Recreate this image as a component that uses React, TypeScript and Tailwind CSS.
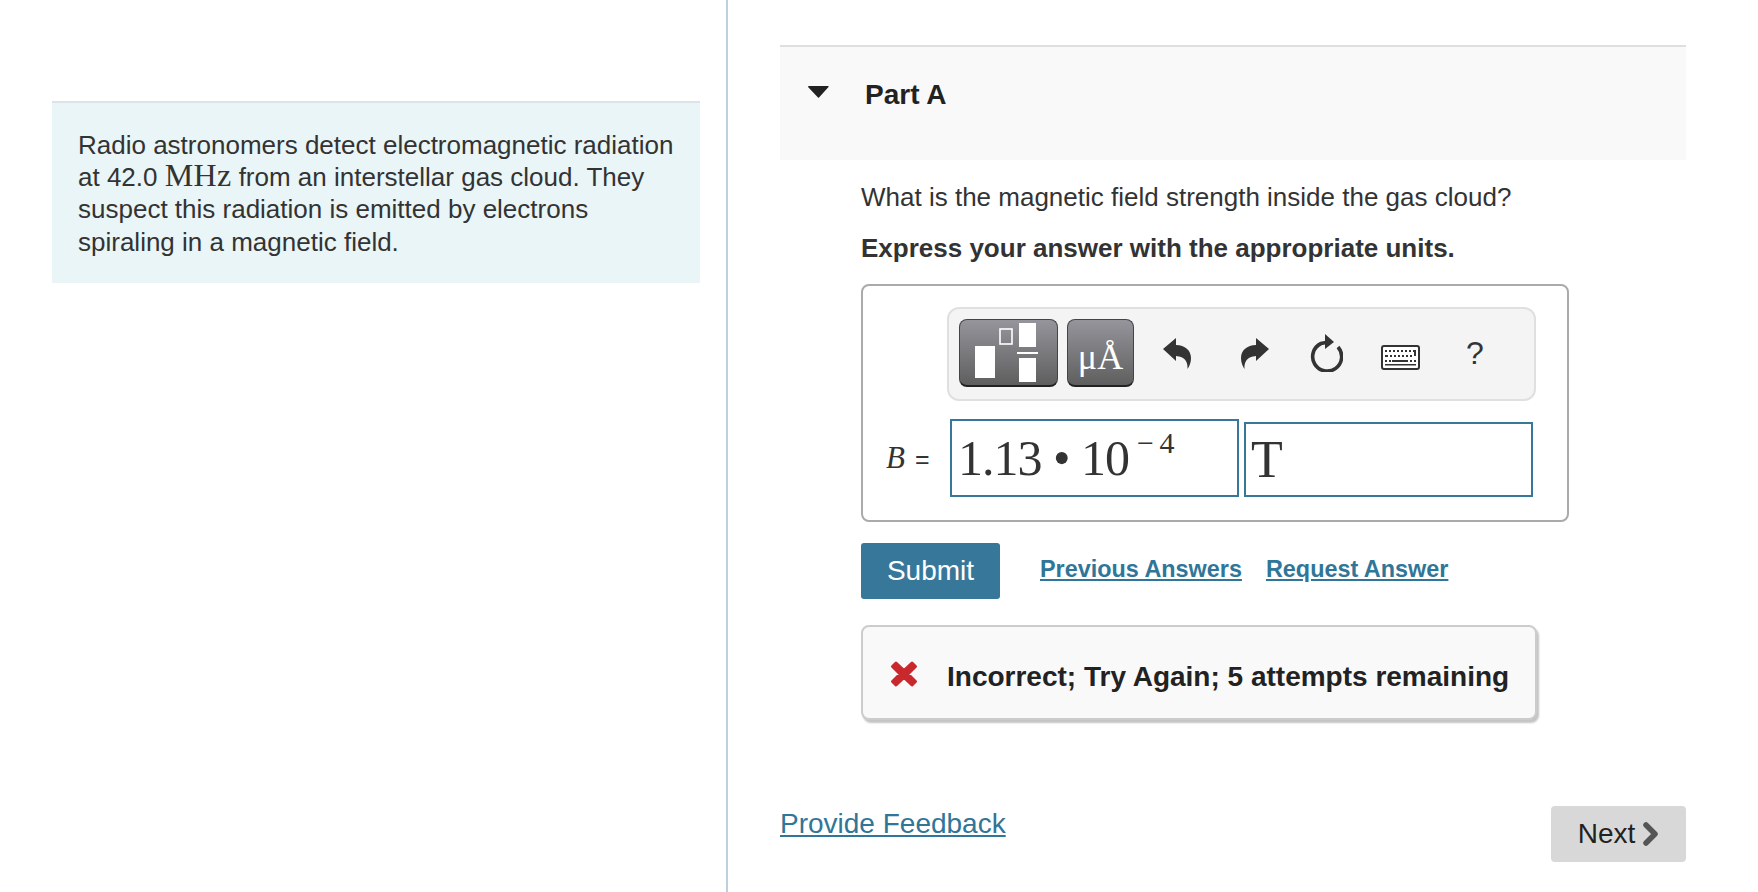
import React from "react";

const Reply = ({ flip = false }: { flip?: boolean }) => (
  <svg width="28" height="31" viewBox="0 0 28 31" className={flip ? "-scale-x-100" : ""}>
    <path d="M0 11 L13 0 V7 C22 7.5 28 12 28 20 C28 24.5 26.5 28 24.5 31 C25 24 22 18.5 13 18 V23 Z" fill="#333" />
  </svg>
);

const Refresh = () => (
  <svg width="34" height="38" viewBox="0 0 34 38" fill="none">
    <path d="M29 13 A14.5 14.5 0 1 1 12 9.5 L17 8.5" stroke="#333" strokeWidth="3.6" />
    <path d="M16 0 L25 8 L16 15 Z" fill="#333" />
  </svg>
);

const Keyboard = () => (
  <svg width="39" height="25" viewBox="0 0 39 25">
    <rect x="1" y="1" width="37" height="23" rx="2" fill="#fff" stroke="#333" strokeWidth="2" />
    <g fill="#333">
      <path d="M4 5h2v2H4zM8 5h2v2H8zM12 5h2v2h-2zM16 5h2v2h-2zM20 5h2v2h-2zM24 5h2v2h-2zM28 5h2v2h-2zM32 5h3v6h-2V7h-1z" />
      <path d="M4 10h3v2H4zM9 10h2v2H9zM13 10h2v2h-2zM17 10h2v2h-2zM21 10h2v2h-2zM25 10h2v2h-2zM29 10h2v2h-2z" />
      <path d="M4 15h2v2H4zM8 15h2v2H8zM11 15h16v2H11zM29 15h2v2h-2zM33 15h2v2h-2z" />
      <path d="M4 19h31v1.5H4z" />
    </g>
  </svg>
);

const RedX = () => (
  <svg width="28" height="28" viewBox="0 0 28 28">
    <path d="M6 3 L14 10.5 L22 3 L25.5 6.5 L18 14 L25.5 21.5 L22 25 L14 17.5 L6 25 L2.5 21.5 L10 14 L2.5 6.5 Z" fill="#c9282d" stroke="#c9282d" strokeWidth="3" strokeLinejoin="round" />
  </svg>
);

export default function App() {
  return (
    <div className="flex h-[892px] overflow-hidden bg-white text-[#333] font-['Liberation_Sans',Arial,sans-serif]">
      <div className="w-[728px] shrink-0 border-r-2 border-[#bcd0dd] pl-[52px] pr-[26px] pt-[101px]">
        <div className="h-[182px] border-t-2 border-[#dde3e6] bg-[#e9f5f7] pl-[26px] pr-[20px] pt-[26px] text-[26px] leading-[32.2px]">
          <p>
            Radio astronomers detect electromagnetic radiation at 42.0{" "}
            <span className="font-['Liberation_Serif',serif] text-[32px] leading-[0] tracking-[0.3px]">MHz</span> from an interstellar gas cloud. They suspect this radiation is emitted by electrons spiraling in a magnetic field.
          </p>
        </div>
      </div>

      <div className="ml-[52px] flex w-[906px] flex-col pt-[45px]">
        <div className="flex h-[115px] items-start border-t-2 border-[#dfdfdf] bg-[#f9f9f9] pl-[28px] pt-[32px]">
          <svg width="21" height="12" viewBox="0 0 21 12" className="mt-[7px]">
            <path d="M0 1 Q0 0 1 0 H20 Q21 0 20.5 1 L11 11.5 Q10.5 12 10 11.5 L0.5 1.5 Z" fill="#222" />
          </svg>
          <span className="ml-[36px] text-[28px] font-bold leading-[32px] text-[#222]">Part A</span>
        </div>

        <div className="pl-[81px]">
          <p className="mt-[22px] text-[26px] leading-[30px]">What is the magnetic field strength inside the gas cloud?</p>
          <p className="mt-[21px] text-[26px] font-bold leading-[30px]">Express your answer with the appropriate units.</p>

          <div className="mt-[21px] h-[238px] w-[708px] rounded-[8px] border-2 border-[#aaa] pl-[84px] pt-[21px]">
            <div className="flex h-[94px] w-[589px] items-center rounded-[12px] border-2 border-[#e0e0e0] bg-[#f4f4f4] pl-[10px] pb-[2px]">
              <div className="flex h-[68px] w-[99px] items-center justify-center rounded-[8px] border border-b-2 border-[#444] border-b-[#222] bg-linear-to-b from-[#96959c] to-[#5f5f5f]">
                <svg width="68" height="60" viewBox="0 0 68 60">
                  <rect x="0" y="23" width="20" height="32" fill="#fff" />
                  <rect x="25" y="6" width="12" height="15" fill="none" stroke="#fff" strokeWidth="1.6" />
                  <rect x="44" y="0" width="17" height="24" fill="#fff" />
                  <rect x="42" y="29" width="21" height="2" fill="#fff" />
                  <rect x="44" y="35" width="17" height="24" fill="#fff" />
                </svg>
              </div>
              <div className="relative ml-[9px] flex h-[68px] w-[67px] items-end justify-center rounded-[8px] border border-b-2 border-[#444] border-b-[#222] bg-linear-to-b from-[#96959c] to-[#5f5f5f] pb-[8px] font-['Liberation_Serif',serif] text-[36px] leading-[40px] text-white">
                μÅ
              </div>
              <div className="ml-[29px] flex w-[28px] justify-center"><Reply /></div>
              <div className="ml-[50px] flex w-[28px] justify-center"><Reply flip /></div>
              <div className="ml-[40px] flex w-[34px] justify-center"><Refresh /></div>
              <div className="ml-[38px] mt-[8px] flex w-[39px] justify-center"><Keyboard /></div>
              <div className="ml-[46px] w-[18px] text-[32px] leading-[36px]">?</div>
            </div>

            <div className="-ml-[82px] mt-[18px] flex items-end">
              <div className="mb-[21px] w-[85px] pl-[21px] text-[25px] leading-[34px]">
                <span className="font-['Liberation_Serif',serif] text-[31px] italic">B</span>
                <span className="ml-[3px] text-[25px]"> =</span>
              </div>
              <div className="relative flex h-[78px] w-[289px] items-center border-2 border-[#37789a] pl-[6px] font-['Liberation_Serif',serif] text-[50px] leading-[60px] tracking-[-1px]">
                1.13 • 10
                <span className="ml-[8px] -mt-[30px] text-[30px] leading-[30px]">− 4</span>
              </div>
              <div className="ml-[5px] flex h-[75px] w-[289px] items-center border-2 border-[#37789a] pl-[5px] font-['Liberation_Serif',serif] text-[52px] leading-[60px]">
                T
              </div>
            </div>
          </div>

          <div className="mt-[21px] flex items-start">
            <button className="h-[56px] w-[139px] rounded-[3px] bg-[#37789a] text-[28px] text-white">Submit</button>
            <a className="ml-[40px] mt-[9px] text-[23.4px] font-bold leading-[34px] text-[#2f7698] underline">Previous Answers</a>
            <a className="ml-[24px] mt-[9px] text-[23.4px] font-bold leading-[34px] text-[#2f7698] underline">Request Answer</a>
          </div>

          <div className="mt-[26px] flex h-[95px] w-[676px] items-center rounded-[8px] border-2 border-[#ccc] bg-[#f9f9f9] pl-[27px] pt-[2px] shadow-[2px_3px_2px_#c4c4c4]">
            <RedX />
            <span className="ml-[29px] pt-[6px] text-[28px] font-bold text-[#222]">Incorrect; Try Again; 5 attempts remaining</span>
          </div>
        </div>

        <div className="mt-[86px] flex items-start justify-between">
          <a className="mt-[1px] text-[28px] leading-[34px] text-[#2f7698] underline">Provide Feedback</a>
          <div className="flex h-[56px] w-[135px] items-center justify-center gap-[8px] rounded-[4px] bg-[#d8d8d8] text-[28px] text-[#222]">
            Next
            <svg width="16" height="24" viewBox="0 0 16 24">
              <path d="M3 3 L12 12 L3 21" fill="none" stroke="#555" strokeWidth="5.5" strokeLinecap="round" strokeLinejoin="round" />
            </svg>
          </div>
        </div>
      </div>
    </div>
  );
}
